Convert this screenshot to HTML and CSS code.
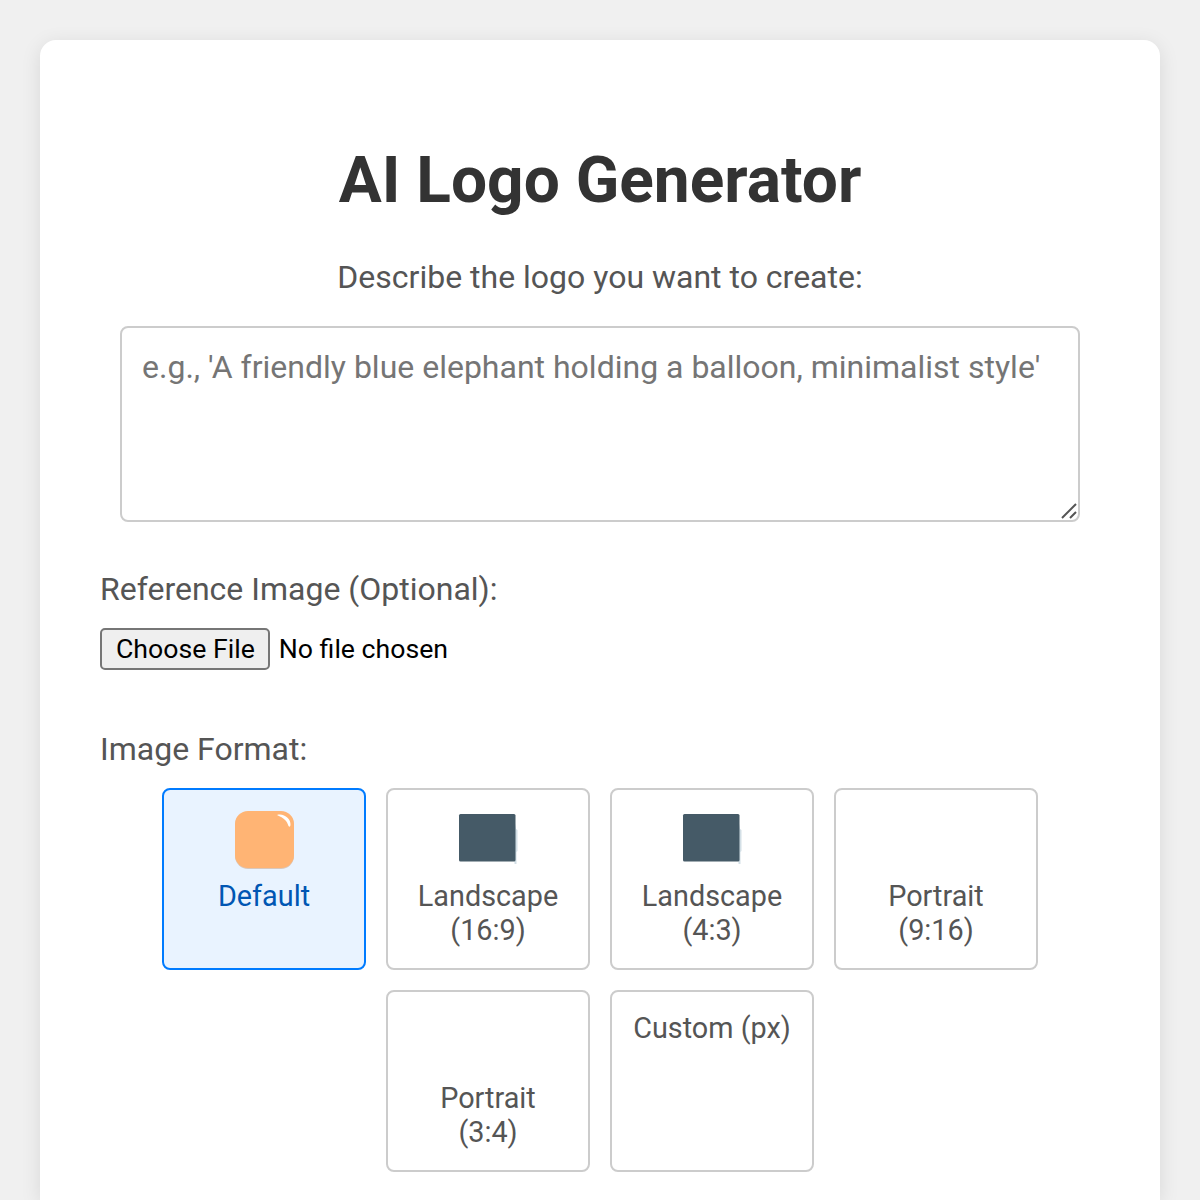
FILE: index.html
```
<!DOCTYPE html>
<html lang="en">
<head>
    <meta charset="UTF-8">
    <meta name="viewport" content="width=device-width, initial-scale=1.0">
    <title>AI Logo Generator</title>
    <link rel="stylesheet" href="styles.css">
</head>
<body>
    <div class="container">
        <h1>AI Logo Generator</h1>
        <label class="prompt-label" for="prompt">Describe the logo you want to create:</label>
        <div class="prompt-box">
            <textarea id="prompt" class="prompt" placeholder="e.g., 'A friendly blue elephant holding a balloon, minimalist style'"></textarea>
            <svg class="resize-grip" viewBox="0 0 18 18" aria-hidden="true">
                <path d="M2 16L16 2M10 16L16 10"/>
            </svg>
        </div>

        <!-- Reference image -->
        <div class="form-group">
            <label for="reference">Reference Image (Optional):</label>
            <input type="file" id="reference" class="file-input" accept="image/*">
        </div>

        <!-- Image format -->
        <div class="form-group">
            <div class="group-label">Image Format:</div>
            <div class="format-options">
                <div class="format-option selected">
                    <svg class="format-icon" viewBox="0 0 60 60">
                        <rect x="1" y="2" width="59" height="57" rx="13" fill="#d9c7bb"/>
                        <rect x="1" y="1" width="59" height="57" rx="13" fill="#ffb474"/>
                        <path d="M43 5C50 3 57 9 56.500 15Q56 18 54.500 16C53 11 50 8 43 5Z" fill="#fff"/>
                    </svg>
                    <span>Default</span>
                </div>
                <div class="format-option">
                    <svg class="format-icon" viewBox="0 0 60 60">
                        <path d="M56 8L58 19L59.500 20V41L58.500 42V54H56.500Z" fill="#d3dfe6"/>
                        <rect x="1" y="4" width="56.500" height="47.500" rx="1.500" fill="#455a67"/>
                    </svg>
                    <span>Landscape (16:9)</span>
                </div>
                <div class="format-option">
                    <svg class="format-icon" viewBox="0 0 60 60">
                        <path d="M56 8L58 19L59.500 20V41L58.500 42V54H56.500Z" fill="#d3dfe6"/>
                        <rect x="1" y="4" width="56.500" height="47.500" rx="1.500" fill="#455a67"/>
                    </svg>
                    <span>Landscape (4:3)</span>
                </div>
                <div class="format-option">
                    <div class="format-icon"></div>
                    <span>Portrait (9:16)</span>
                </div>
                <div class="format-option">
                    <div class="format-icon"></div>
                    <span>Portrait (3:4)</span>
                </div>
                <div class="format-option">
                    <span>Custom (px)</span>
                </div>
            </div>
        </div>
    </div>
</body>
</html>
```
FILE: styles.css
```
* {
    box-sizing: border-box;
}

body {
    margin: 0;
    padding: 40px 40px 0;
    height: 1200px;
    overflow: hidden;
    font-family: Roboto, sans-serif;
    font-size: 32px;
    color: #555;
    background-color: #f0f0f0;
}

.container {
    height: 1160px;
    padding: 60px 60px 0;
    background-color: #fff;
    border-radius: 16px 16px 0 0;
    box-shadow: 0 4px 20px rgba(0, 0, 0, 0.1);
}

h1 {
    margin: 43px 0 40px;
    font-size: 64px;
    line-height: 75px;
    text-align: center;
    color: #333;
}

.prompt-label {
    display: block;
    line-height: 38px;
    text-align: center;
}

.prompt-box {
    position: relative;
    margin: 30px 20px 48px;
    height: 196px;
}

.prompt {
    display: block;
    width: 100%;
    height: 100%;
    padding: 20px;
    border: 2px solid #ccc;
    border-radius: 8px;
    font: inherit;
    line-height: 38px;
    resize: none;
    overflow: hidden;
}

.prompt::placeholder {
    color: #757575;
}

.resize-grip {
    position: absolute;
    right: 2px;
    bottom: 2px;
    width: 18px;
    height: 18px;
    fill: none;
    stroke: #555;
    stroke-width: 2;
}

.form-group + .form-group {
    margin-top: 60px;
}

.form-group label,
.group-label {
    display: block;
    margin-bottom: 20px;
    line-height: 38px;
}

.file-input {
    display: block;
    width: 100%;
    height: 42px;
    font-family: inherit;
    font-size: 26.67px;
    color: #000;
}

.file-input::file-selector-button {
    height: 42px;
    margin: 0 9px 0 0;
    padding: 2px 13px 2px 14px;
    border: 2px solid #767676;
    border-radius: 5px;
    font: inherit;
    color: #000;
    background-color: #efefef;
}

.format-options {
    display: flex;
    flex-wrap: wrap;
    justify-content: center;
    gap: 20px;
}

.format-option {
    display: flex;
    flex-direction: column;
    align-items: center;
    width: 204px;
    height: 182px;
    padding: 19px 20px 20px;
    border: 2px solid #ccc;
    border-radius: 8px;
    font-size: 28.8px;
    line-height: 34px;
    text-align: center;
}

.format-option.selected {
    color: #0056b3;
    background-color: #e9f3ff;
    border-color: #007bff;
}

.format-icon {
    flex-shrink: 0;
    width: 60px;
    height: 60px;
    margin: 1px 0 9px;
}
```
